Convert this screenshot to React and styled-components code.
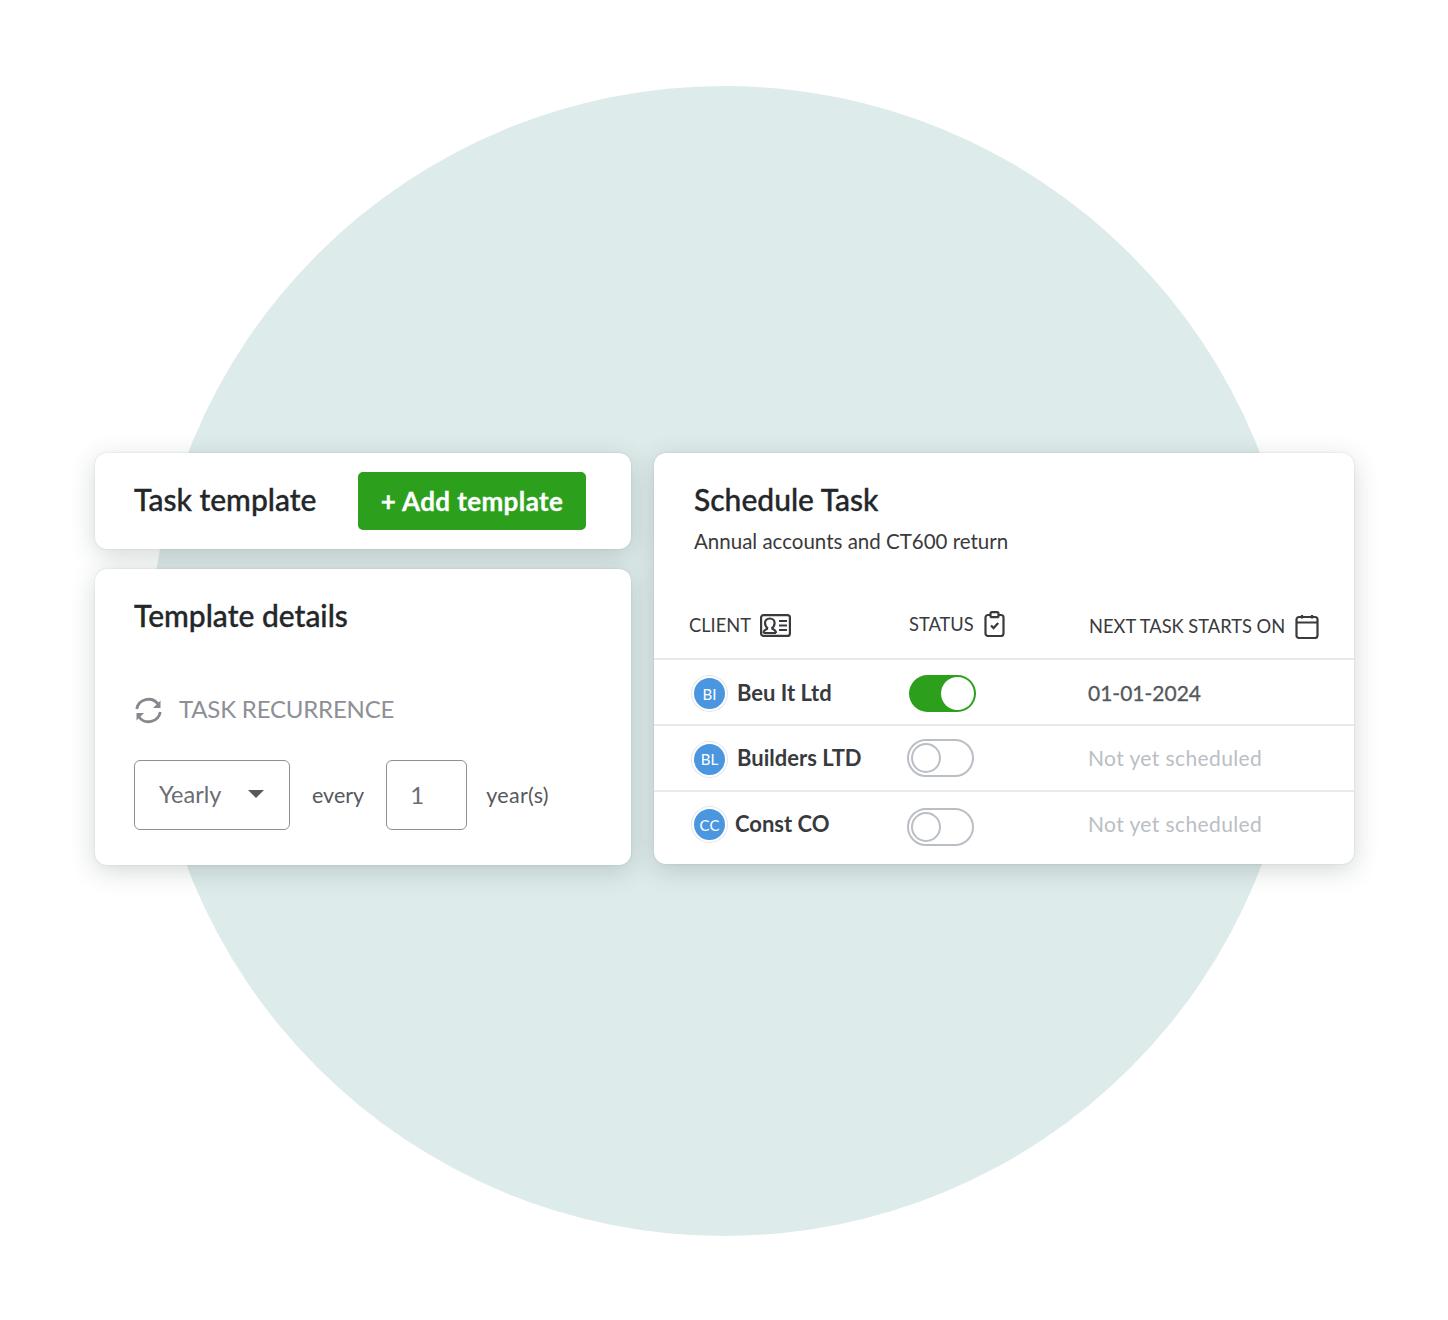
import styled, { createGlobalStyle } from "styled-components";

const GlobalStyle = createGlobalStyle`
  html, body {
    margin: 0;
    padding: 0;
    background: #fff;
    font-family: "Lato", "Liberation Sans", sans-serif;
  }
`;

const Page = styled.div`
  position: relative;
  width: 1448px;
  height: 1320px;
  overflow: hidden;
  box-sizing: border-box;
  padding: 453px 94px 0 95px;
  display: flex;
  align-items: flex-start;
  gap: 23px;
`;

const Circle = styled.div`
  position: absolute;
  left: 149px;
  top: 86px;
  width: 1150px;
  height: 1150px;
  border-radius: 50%;
  background: #deebeb;
`;

const LeftColumn = styled.div`
  position: relative;
  width: 536px;
  display: flex;
  flex-direction: column;
  gap: 20px;
`;

const Card = styled.section`
  background: #fff;
  border-radius: 12px;
  box-shadow: 0 6px 26px rgba(40, 60, 60, 0.2), 0 0 2px rgba(40, 60, 60, 0.16);
  box-sizing: border-box;
`;

const HeaderCard = styled(Card)`
  height: 96px;
  padding: 19px 45px 0 39px;
  display: flex;
  justify-content: space-between;
  align-items: flex-start;
`;

const CardTitle = styled.h2`
  margin: ${(p) => p.$top || 0}px 0 0;
  font-size: 30px;
  font-weight: 500;
  line-height: 40px;
  color: #23272a;
  -webkit-text-stroke: 0.35px #23272a;
`;

const AddButton = styled.button`
  width: 228px;
  height: 58px;
  border: 0;
  border-radius: 5px;
  background: #2ca01c;
  color: #fff;
  font: 700 26px "Lato", sans-serif;
  letter-spacing: 0.4px;
  -webkit-text-stroke: 0.3px #fff;
  cursor: pointer;
`;

const DetailsCard = styled(Card)`
  height: 296px;
  padding: 19px 39px 0;
`;

const RecurrenceHeading = styled.div`
  margin-top: 57px;
  display: flex;
  align-items: center;
  gap: 17px;
  font-size: 24px;
  letter-spacing: -0.2px;
  color: #8d9096;
  svg {
    margin-top: 5px;
  }
`;

const RecurrenceRow = styled.div`
  margin-top: 35px;
  display: flex;
  align-items: center;
  font-size: 21.500px;
  color: #55585c;
`;

const SelectBox = styled.div`
  width: 156px;
  height: 70px;
  box-sizing: border-box;
  border: 1px solid #8d9096;
  border-radius: 6px;
  padding: 0 25px 2px 24px;
  display: flex;
  align-items: center;
  justify-content: space-between;
  font-size: 23.500px;
  color: #6b6c72;
`;

const Caret = styled.span`
  width: 0;
  height: 0;
  border-left: 8px solid transparent;
  border-right: 8px solid transparent;
  border-top: 8px solid #55585c;
`;

const RowLabel = styled.span`
  margin: 0 ${(p) => p.$after}px 0 ${(p) => p.$before}px;
  letter-spacing: ${(p) => p.$spacing || 0}px;
`;

const NumberBox = styled.div`
  width: 81px;
  height: 70px;
  box-sizing: border-box;
  border: 1px solid #8d9096;
  border-radius: 6px;
  padding: 0 0 2px 23px;
  display: flex;
  align-items: center;
  font-size: 24px;
  color: #6b6c72;
`;

const ScheduleCard = styled(Card)`
  position: relative;
  width: 700px;
  height: 411px;
  overflow: hidden;
`;

const ScheduleHead = styled.div`
  height: 137px;
  box-sizing: border-box;
  padding: 26px 40px 0;
`;

const Subtitle = styled.p`
  margin: 7px 0 0;
  font-size: 20.500px;
  line-height: 30px;
  color: #393a3d;
`;

const Row = styled.div`
  height: ${(p) => p.$h}px;
  box-sizing: border-box;
  display: grid;
  grid-template-columns: 255px 180px 1fr;
  align-items: center;
  padding: ${(p) => p.$top || 0}px 0 ${(p) => p.$bottom || 0}px;
  border-bottom: ${(p) => (p.$last ? "0" : "2px solid #e9eaea")};
`;

const ColumnHead = styled.div`
  display: flex;
  align-items: center;
  gap: ${(p) => p.$gap || 10}px;
  padding-left: ${(p) => p.$pad || 0}px;
  margin-top: ${(p) => p.$dy || 0}px;
  font-size: 18.300px;
  color: #393a3d;
`;

const ClientCell = styled.div`
  display: flex;
  align-items: center;
  padding-left: 40px;
  gap: ${(p) => p.$gap}px;
  font-size: 22px;
  font-weight: 700;
  color: #393a3d;
`;

const Avatar = styled.span`
  width: 31px;
  height: 31px;
  margin-top: ${(p) => p.$dy}px;
  flex: none;
  border-radius: 50%;
  background: #4a97e0;
  box-shadow: 0 0 0 2px #fff, 0 0 0 3px #e3e5e7;
  color: #fff;
  font-size: 15px;
  font-weight: 400;
  display: flex;
  align-items: center;
  justify-content: center;
`;

const Toggle = styled.span`
  width: 67px;
  height: ${(p) => (p.$on ? 37 : 38)}px;
  box-sizing: border-box;
  border-radius: 19px;
  display: flex;
  align-items: center;
  justify-content: ${(p) => (p.$on ? "flex-end" : "flex-start")};
  padding: 0 2px;
  margin: ${(p) => p.$dy}px 0 0 ${(p) => (p.$on ? 0 : -2)}px;
  background: ${(p) => (p.$on ? "#2ca01c" : "#fff")};
  border: ${(p) => (p.$on ? "0" : "2px solid #babec5")};
  &::after {
    content: "";
    box-sizing: border-box;
    width: ${(p) => (p.$on ? 33 : 30)}px;
    height: ${(p) => (p.$on ? 33 : 30)}px;
    border-radius: 50%;
    background: #fff;
    border: ${(p) => (p.$on ? "0" : "2px solid #babec5")};
  }
`;

const DateCell = styled.span`
  margin-left: -1px;
  font-size: 21px;
  letter-spacing: ${(p) => (p.$muted ? 0.4 : 0)}px;
  font-weight: 400;
  color: ${(p) => (p.$muted ? "#babec5" : "#55585c")};
  -webkit-text-stroke: ${(p) => (p.$muted ? 0 : 0.3)}px #55585c;
`;

const IdCardIcon = () => (
  <svg width="31" height="23" viewBox="0 0 31 23" fill="none" stroke="#393a3d" strokeWidth="2.200">
    <rect x="1.100" y="1.100" width="28.800" height="20.800" rx="2.500" />
    <path d="M8 14.500c-2-1.500-3-3.300-3-5.500 0-2.600 1.900-4.500 4.800-4.500s4.800 1.900 4.800 4.500c0 2.200-1 4-3 5.500" />
    <path d="M3.500 19c0-2.500 2.200-3.800 4.500-4.500M16 19c0-2.500-2.200-3.800-4.400-4.500M3.500 19h12.500" />
    <path d="M19 7h8M19 11.500h8M19 16h8" />
  </svg>
);

const ClipboardIcon = () => (
  <svg width="21" height="26" viewBox="0 0 21 26" fill="none" stroke="#393a3d" strokeWidth="2.200">
    <rect x="1.500" y="4" width="18" height="21" rx="2.500" />
    <rect x="6.500" y="1.200" width="8" height="5" rx="1.500" fill="#fff" />
    <path d="M7 14.500l2.600 2.600 4.600-5" />
  </svg>
);

const CalendarIcon = () => (
  <svg width="24" height="25" viewBox="0 0 24 25" fill="none" stroke="#393a3d" strokeWidth="2.200">
    <rect x="1.500" y="3" width="21" height="21" rx="2.500" />
    <path d="M1.500 8.500h21M7 1v3.500M17 1v3.500" />
  </svg>
);

const SyncIcon = () => (
  <svg width="28" height="28" viewBox="0 0 28 28" fill="none" stroke="#85888c" strokeWidth="2.800">
    <path d="M2.700 12A12 12 0 0 1 24 7" />
    <path d="M26.300 15A12 12 0 0 1 5 20" />
    <path d="M26.500 3.500v7.500h-7.500z" fill="#85888c" stroke="none" />
    <path d="M2.500 23.500v-7.500h7.500z" fill="#85888c" stroke="none" />
  </svg>
);

const clients = [
  { initials: "BI", name: "Beu It Ltd", gap: 12, on: true, date: "01-01-2024", h: 66, avatarDy: 3, toggleDy: 2 },
  { initials: "BL", name: "Builders LTD", gap: 12, on: false, date: "Not yet scheduled", h: 66, bottom: 2, avatarDy: 4, toggleDy: 2 },
  { initials: "CC", name: "Const CO", gap: 10, on: false, date: "Not yet scheduled", h: 73, bottom: 10, avatarDy: 2, toggleDy: 7, last: true },
];

export default function App() {
  return (
    <>
      <GlobalStyle />
      <Page>
        <Circle />
        <LeftColumn>
          <HeaderCard>
            <CardTitle $top={7}>Task template</CardTitle>
            <AddButton>+ Add template</AddButton>
          </HeaderCard>
          <DetailsCard>
            <CardTitle $top={7}>Template details</CardTitle>
            <RecurrenceHeading>
              <SyncIcon />
              TASK RECURRENCE
            </RecurrenceHeading>
            <RecurrenceRow>
              <SelectBox>
                Yearly
                <Caret />
              </SelectBox>
              <RowLabel $before={22} $after={22}>every</RowLabel>
              <NumberBox>1</NumberBox>
              <RowLabel $before={19} $after={0} $spacing={0.3}>year(s)</RowLabel>
            </RecurrenceRow>
          </DetailsCard>
        </LeftColumn>
        <ScheduleCard>
          <ScheduleHead>
            <CardTitle>Schedule Task</CardTitle>
            <Subtitle>Annual accounts and CT600 return</Subtitle>
          </ScheduleHead>
          <Row $h={70} $top={2}>
            <ColumnHead $pad={35} $gap={9}>
              CLIENT
              <IdCardIcon />
            </ColumnHead>
            <ColumnHead $dy={-2}>
              STATUS
              <ClipboardIcon />
            </ColumnHead>
            <ColumnHead $dy={2}>
              NEXT TASK STARTS ON
              <CalendarIcon />
            </ColumnHead>
          </Row>
          {clients.map((client) => (
            <Row key={client.initials} $h={client.h} $bottom={client.bottom} $last={client.last}>
              <ClientCell $gap={client.gap}>
                <Avatar $dy={client.avatarDy}>{client.initials}</Avatar>
                {client.name}
              </ClientCell>
              <div>
                <Toggle $on={client.on} $dy={client.toggleDy} />
              </div>
              <DateCell $muted={!client.on}>{client.date}</DateCell>
            </Row>
          ))}
        </ScheduleCard>
      </Page>
    </>
  );
}
